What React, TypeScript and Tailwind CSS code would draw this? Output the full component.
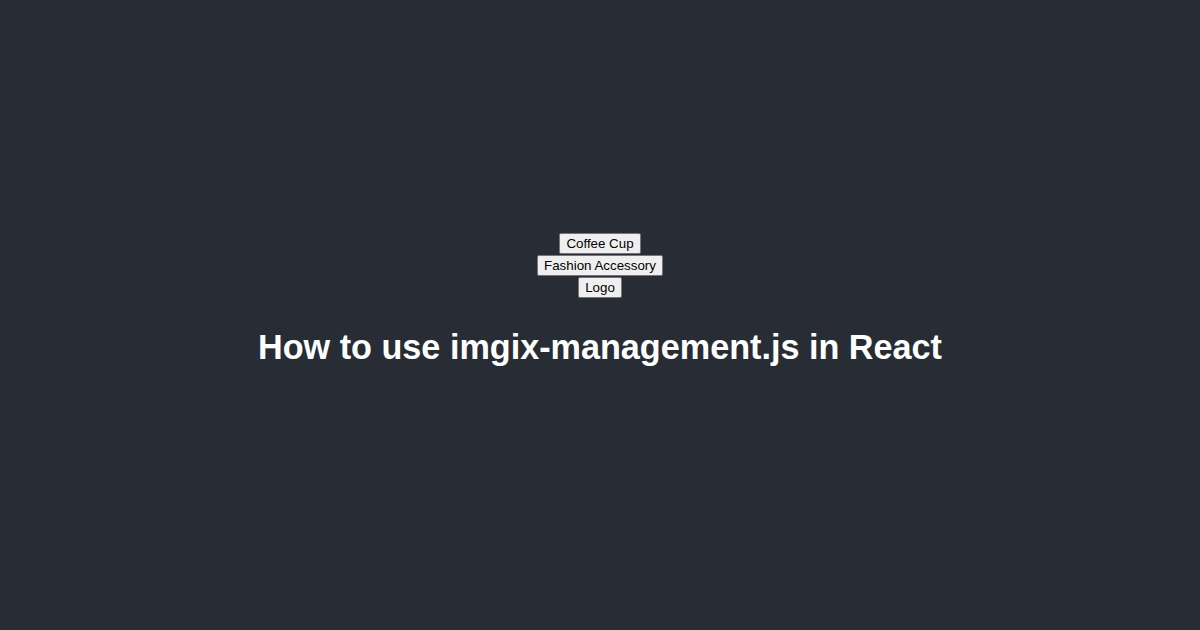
export default function App() {
  const items = ['Coffee Cup', 'Fashion Accessory', 'Logo'];
  return (
    <div className="min-h-screen bg-[#282c34] flex flex-col items-center justify-center text-white font-['Liberation_Sans',Arial,sans-serif]">
      <div className="flex flex-col items-center gap-px">
        {items.map((label) => (
          <button
            key={label}
            className="bg-[#efefef] border border-[#767676] rounded-[2px] px-[6px] py-[2px] text-[13.33px] leading-[normal] text-black"
          >
            {label}
          </button>
        ))}
      </div>
      <h1 className="text-[34.2px] font-bold leading-[normal] my-[30px]">How to use imgix-management.js in React</h1>
    </div>
  );
}
